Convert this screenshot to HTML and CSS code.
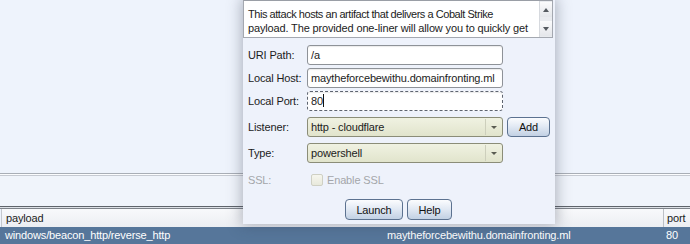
FILE: index.html
```html
<!DOCTYPE html>
<html>
<head>
<meta charset="utf-8">
<link rel="stylesheet" href="styles.css">
</head>
<body>
<div class="screen">
  <div class="backdrop">
    <div class="spacer"></div>
    <div class="rule rule-light"></div>
    <div class="band"></div>
    <div class="rule rule-dark"></div>
    <div class="table-head">
      <div class="cell">payload</div>
      <div class="cell"></div>
      <div class="cell col-port">port</div>
    </div>
    <div class="table-row selected">
      <div class="cell">windows/beacon_http/reverse_http</div>
      <div class="cell col-host">maytheforcebewithu.domainfronting.ml</div>
      <div class="cell col-port-val">80</div>
    </div>
  </div>

  <div class="dialog">
    <div class="scrollpane">
      <div class="desc"><span class="desc-line tight">This attack hosts an artifact that delivers a Cobalt Strike</span><span class="desc-line">payload. The provided one-liner will allow you to quickly get</span></div>
      <div class="vscroll">
        <div class="sbtn"><span class="arrow-up"></span></div>
        <div class="sbtn"><span class="arrow-down"></span></div>
      </div>
    </div>

    <div class="form">
      <div class="row">
        <div class="label">URI Path:</div>
        <div class="input">/a</div>
      </div>
      <div class="row">
        <div class="label">Local Host:</div>
        <div class="input">maytheforcebewithu.domainfronting.ml</div>
      </div>
      <div class="row">
        <div class="label">Local Port:</div>
        <div class="input focused">80<span class="caret"></span></div>
      </div>
      <div class="row combo-row">
        <div class="label">Listener:</div>
        <div class="combo"><span class="combo-text">http - cloudflare</span><span class="combo-arrow"><span class="arrow-down"></span></span></div>
        <div class="button btn-add">Add</div>
      </div>
      <div class="row combo-row">
        <div class="label">Type:</div>
        <div class="combo"><span class="combo-text">powershell</span><span class="combo-arrow"><span class="arrow-down"></span></span></div>
      </div>
      <div class="row ssl-row">
        <div class="label disabled">SSL:</div>
        <div class="check-wrap"><span class="checkbox"></span><span class="disabled">Enable SSL</span></div>
      </div>
      <div class="actions">
        <div class="button btn-launch">Launch</div>
        <div class="button btn-help">Help</div>
      </div>
    </div>
  </div>
</div>
</body>
</html>
```
FILE: styles.css
```css
* { box-sizing: border-box; }
html, body {
  margin: 0;
  padding: 0;
  width: 690px;
  height: 244px;
  overflow: hidden;
  background: #eef3fc;
  font-family: "Liberation Sans", Arial, sans-serif;
  font-size: 11px;
  letter-spacing: -0.15px;
  color: #1c1c1c;
}
.screen {
  position: relative;
  width: 690px;
  height: 244px;
}
.backdrop {
  display: flex;
  flex-direction: column;
  height: 244px;
}
.spacer { height: 173px; }
.rule { height: 3px; }
.rule-light {
  border-top: 1px solid #a9aeb6;
  border-bottom: 1px solid #c6cad2;
  background: #fbfcfe;
}
.band {
  height: 30px;
  background: #f0f4fb;
}
.rule-dark {
  border-top: 1px solid #5f646b;
  border-bottom: 1px solid #7e838a;
  background: #dde1e7;
}
.table-head, .table-row {
  display: grid;
  grid-template-columns: 385px 276px 1fr;
  align-items: center;
}
.table-head {
  height: 18px;
  background: linear-gradient(#f8f9fb, #eceef2);
  border-left: 1px solid #c4c8ce;
  margin-left: 1px;
}
.table-head .cell {
  padding-left: 4px;
  height: 18px;
  line-height: 18px;
}
.table-head .col-port {
  border-left: 1px solid #bcc0c6;
  padding-left: 3px;
}
.table-row {
  height: 17px;
  background: #56769a;
  color: #ffffff;
}
.table-row .cell {
  padding-left: 5px;
  line-height: 17px;
  white-space: nowrap;
}
.table-row .col-host { padding-left: 2px; }
.table-row .col-port-val { padding-left: 5px; }

.dialog {
  position: absolute;
  left: 243px;
  top: 0;
  width: 312px;
  height: 224px;
  background: #eef2fb;
  box-shadow: 0 0 13px 2px rgba(50, 60, 80, 0.34);
  display: flex;
  flex-direction: column;
}
.scrollpane {
  display: flex;
  height: 38px;
  margin-right: 2px;
  background: #ffffff;
  border: 1px solid #a4a8b0;
  border-top-color: #9a9ea6;
}
.desc {
  flex: 1;
  display: flex;
  flex-direction: column;
  padding: 5.5px 0 0 4px;
  line-height: 14.5px;
  white-space: nowrap;
  overflow: hidden;
}
.desc-line.tight { letter-spacing: -0.45px; }
.vscroll {
  width: 13px;
  background: #e9ebef;
  border-left: 1px solid #d6d9de;
  display: flex;
  flex-direction: column;
  justify-content: space-between;
  padding: 1px 0;
}
.sbtn {
  height: 15px;
  background: linear-gradient(#fbfbfc, #e4e6ea);
  display: flex;
  align-items: center;
  justify-content: center;
}
.arrow-up, .arrow-down {
  width: 0;
  height: 0;
  border-left: 3px solid transparent;
  border-right: 3px solid transparent;
}
.arrow-up { border-bottom: 4px solid #555a60; }
.arrow-down { border-top: 4px solid #555a60; }

.form {
  display: flex;
  flex-direction: column;
  padding-left: 5px;
  margin-top: 7px;
}
.row {
  display: flex;
  align-items: center;
  height: 20px;
}
.row + .row { margin-top: 3px; }
.row.combo-row { margin-top: 6px; }
.row.ssl-row { margin-top: 7px; }
.label {
  width: 59px;
  flex: none;
}
.disabled { color: #a4a6aa; }
.input {
  width: 196px;
  height: 20px;
  background: #ffffff;
  border: 1px solid #8e9298;
  border-radius: 3px;
  padding-left: 3px;
  line-height: 18px;
  box-shadow: inset 0 1px 1px rgba(0, 0, 0, 0.08);
  white-space: nowrap;
  overflow: hidden;
}
.input.focused {
  border: 1px dashed #5e6470;
}
.caret {
  display: inline-block;
  width: 1px;
  height: 13px;
  background: #111;
  vertical-align: -2px;
  margin-left: 0.5px;
}
.combo {
  width: 196px;
  height: 20px;
  display: flex;
  align-items: center;
  border: 1px solid #8b8d78;
  border-radius: 3px;
  background: linear-gradient(#f0f2e2, #e1e4cc);
}
.combo-text {
  flex: 1;
  padding-left: 3px;
}
.combo-arrow {
  width: 17px;
  height: 16px;
  border-left: 1px solid #cdcfbc;
  display: flex;
  align-items: center;
  justify-content: center;
}
.combo-arrow .arrow-down { border-top-color: #5a5c52; border-top-width: 3px; }
.check-wrap {
  display: flex;
  align-items: center;
  padding-left: 4px;
}
.checkbox {
  width: 12px;
  height: 12px;
  border: 1px solid #cfd0c4;
  border-radius: 2px;
  background: linear-gradient(#f6f6ee, #e8e9dc);
  margin-right: 4px;
}
.button {
  height: 20px;
  border: 1px solid #5c7290;
  border-radius: 4px;
  background: linear-gradient(#fbfcfe 0%, #e3eaf4 45%, #c2d1e4 100%);
  display: flex;
  align-items: center;
  justify-content: center;
  color: #111;
}
.btn-add {
  width: 43px;
  margin-left: 4px;
}
.actions {
  display: flex;
  justify-content: center;
  gap: 4px;
  margin-top: 9px;
  margin-left: -5px;
  padding-right: 1px;
}
.actions .button { height: 21px; }
.btn-launch { width: 58px; }
.btn-help { width: 45px; }
```
